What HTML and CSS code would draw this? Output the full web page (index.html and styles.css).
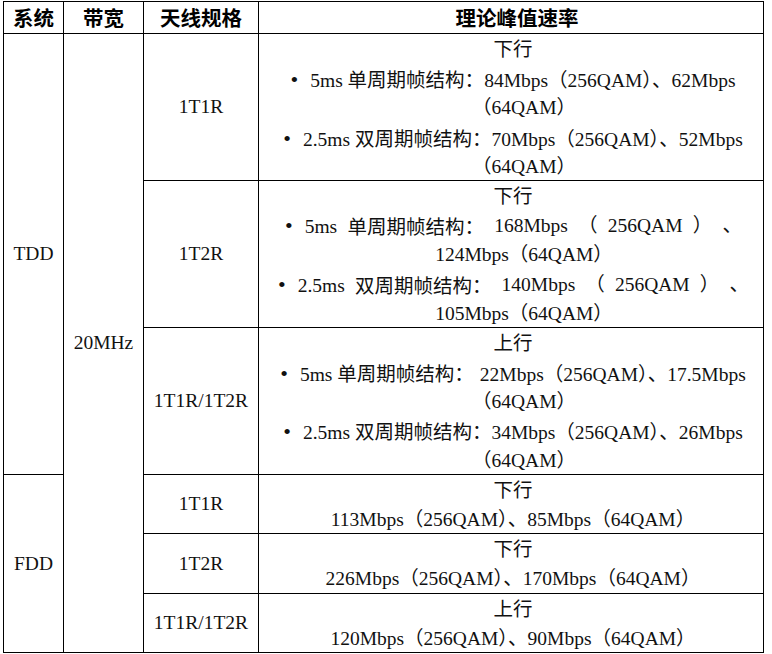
FILE: index.html
```html
<!DOCTYPE html>
<html lang="zh-CN">
<head>
<meta charset="utf-8">
<title>理论峰值速率</title>
<link rel="stylesheet" href="styles.css">
</head>
<body>
<table class="spec">
  <colgroup>
    <col class="c-sys">
    <col class="c-bw">
    <col class="c-ant">
    <col class="c-rate">
  </colgroup>
  <thead>
    <tr>
      <th>系统</th>
      <th>带宽</th>
      <th>天线规格</th>
      <th class="h-rate">理论峰值速率</th>
    </tr>
  </thead>
  <tbody>
    <tr>
      <td rowspan="3">TDD</td>
      <td rowspan="6">20MHz</td>
      <td>1T1R</td>
      <td class="rate">
        <div class="ln dir">下行</div>
        <div class="ln item"><span class="dot">•</span>5ms 单周期帧结构<span class="colon">：</span>84Mbps（256QAM）、62Mbps</div>
        <div class="ln cont">（64QAM）</div>
        <div class="ln item"><span class="dot">•</span>2.5ms 双周期帧结构<span class="colon">：</span>70Mbps（256QAM）、52Mbps</div>
        <div class="ln cont">（64QAM）</div>
      </td>
    </tr>
    <tr>
      <td>1T2R</td>
      <td class="rate">
        <div class="ln dir">下行</div>
        <div class="ln spread first">
          <span class="tok"><span class="dot">•</span>5ms</span>
          <span class="tok">单周期帧结构<span class="colon">：</span></span>
          <span class="tok">168Mbps</span>
          <span class="tok">（</span>
          <span class="tok">256QAM</span>
          <span class="tok">）</span>
          <span class="tok">、</span>
        </div>
        <div class="ln cont">124Mbps（64QAM）</div>
        <div class="ln spread second">
          <span class="tok"><span class="dot">•</span>2.5ms</span>
          <span class="tok">双周期帧结构<span class="colon">：</span></span>
          <span class="tok">140Mbps</span>
          <span class="tok">（</span>
          <span class="tok">256QAM</span>
          <span class="tok">）</span>
          <span class="tok">、</span>
        </div>
        <div class="ln cont">105Mbps（64QAM）</div>
      </td>
    </tr>
    <tr>
      <td>1T1R/1T2R</td>
      <td class="rate">
        <div class="ln dir">上行</div>
        <div class="ln item"><span class="dot">•</span>5ms 单周期帧结构<span class="colon">：</span><span class="sp"></span>22Mbps（256QAM）、17.5Mbps</div>
        <div class="ln cont">（64QAM）</div>
        <div class="ln item"><span class="dot">•</span>2.5ms 双周期帧结构<span class="colon">：</span>34Mbps（256QAM）、26Mbps</div>
        <div class="ln cont">（64QAM）</div>
      </td>
    </tr>
    <tr>
      <td rowspan="3">FDD</td>
      <td>1T1R</td>
      <td class="rate">
        <div class="ln dir">下行</div>
        <div class="ln line">113Mbps（256QAM）、85Mbps（64QAM）</div>
      </td>
    </tr>
    <tr>
      <td>1T2R</td>
      <td class="rate">
        <div class="ln dir">下行</div>
        <div class="ln line">226Mbps（256QAM）、170Mbps（64QAM）</div>
      </td>
    </tr>
    <tr>
      <td>1T1R/1T2R</td>
      <td class="rate">
        <div class="ln dir">上行</div>
        <div class="ln line">120Mbps（256QAM）、90Mbps（64QAM）</div>
      </td>
    </tr>
  </tbody>
</table>
</body>
</html>
```

FILE: styles.css
```css
html, body {
  margin: 0;
  background: #ffffff;
}

body {
  padding: 1px 0 0 3px;
}

.spec {
  border-collapse: collapse;
  table-layout: fixed;
  width: 761px;
  font-family: "Liberation Serif", "Noto Sans CJK SC", serif;
  font-size: 19.5px;
  color: #111111;
}

.c-sys { width: 60px; }
.c-bw { width: 80px; }
.c-ant { width: 115px; }
.c-rate { width: 505px; }

.spec th,
.spec td {
  border: 1px solid #000000;
  padding: 0;
  text-align: center;
  vertical-align: middle;
}

.spec th {
  height: 31px;
  font-family: "Noto Sans CJK SC", sans-serif;
  font-weight: 700;
  font-size: 20.5px;
  line-height: 31px;
  color: #000000;
}

.spec th.h-rate {
  padding-left: 12px;
}

.spec td {
  line-height: 29.2px;
  white-space: nowrap;
}

.spec td.rate {
  padding-left: 4px;
}

.ln {
  box-sizing: border-box;
  height: 29.2px;
  padding-top: 1px;
  overflow: visible;
}

.dir {
  text-align: center;
}

.item {
  text-align: center;
}

.dot {
  display: inline-block;
  font-size: 22px;
  margin-right: 12px;
}

.colon {
  font-family: "Noto Sans CJK TC", "Noto Sans CJK SC", sans-serif;
}

.sp {
  display: inline-block;
  width: 6px;
}

.cont {
  text-align: center;
  padding-left: 22px;
}

.spread {
  display: flex;
  justify-content: space-between;
}

.spread.first {
  margin: 0 21px 0 22px;
}

.spread.second {
  margin: 0 14px 0 15px;
}

.line {
  text-align: center;
}
```
